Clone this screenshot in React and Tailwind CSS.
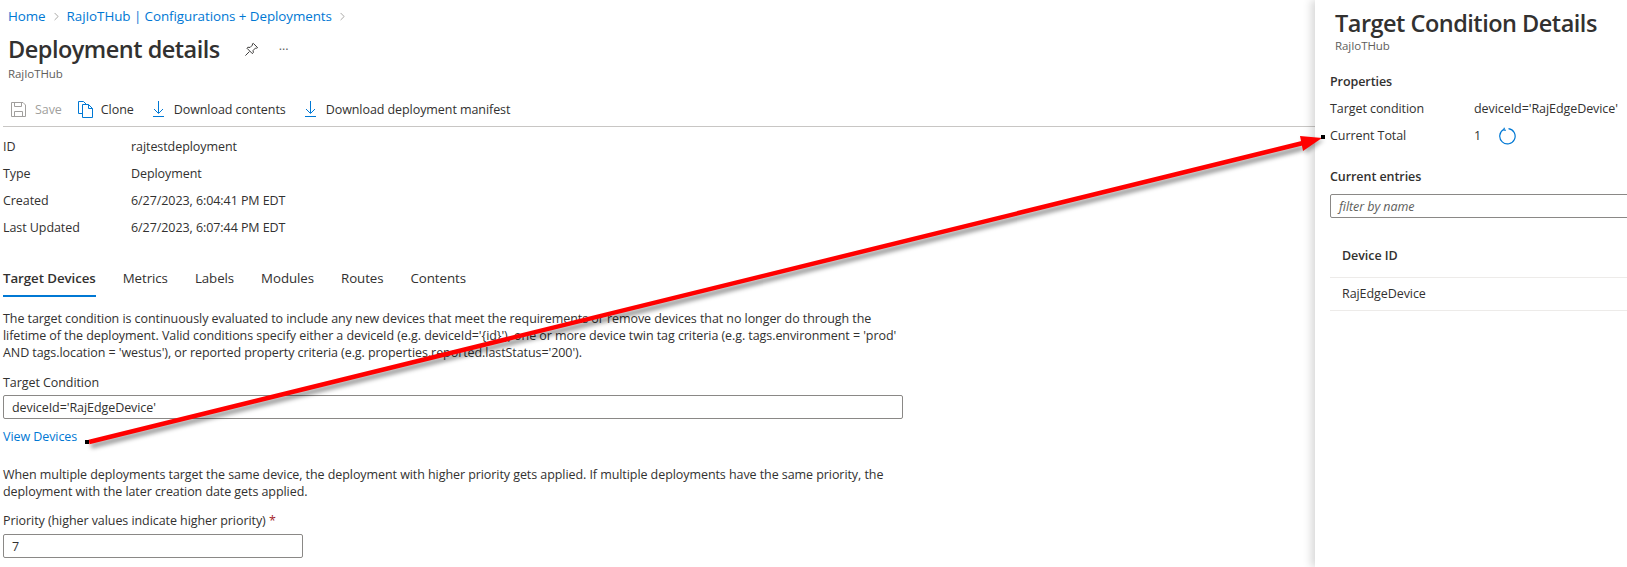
import { ChevronRight } from "lucide-react";

const rows = [
  ["ID", "rajtestdeployment"],
  ["Type", "Deployment"],
  ["Created", "6/27/2023, 6:04:41 PM EDT"],
  ["Last Updated", "6/27/2023, 6:07:44 PM EDT"],
];

const tabs = ["Metrics", "Labels", "Modules", "Routes", "Contents"];

function Pin() {
  return (
    <svg width="15" height="15" viewBox="0 0 16 16" fill="none" stroke="#323130" strokeWidth="1">
      <path d="M10 1.5 14.5 6l-1 .6-1.2-.2-2.6 2.6.2 2.4-1 1L3.1 6.6l1-1 2.4.2 2.6-2.6-.2-1.2z" />
      <path d="M5.8 10.2 1.5 14.5" />
    </svg>
  );
}

function SaveIcon() {
  return (
    <svg width="15" height="15" viewBox="0 0 15 15" fill="none" stroke="#a19f9d" strokeWidth="1">
      <path d="M.5.5h11.5l2.5 2.5v11.5H.5z" />
      <path d="M3.5.5v4h7v-4M3.5 14.5v-5h8v5" />
    </svg>
  );
}

function CloneIcon() {
  return (
    <svg width="15" height="17" viewBox="0 0 15 17" fill="none" stroke="#0078d4" strokeWidth="1">
      <path d="M4.5 12.5H.5V.5h5l2.5 2.5" />
      <path d="M4.5 3.5h6l4 4v9h-10z" />
      <path d="M10.5 3.5v4h4" />
    </svg>
  );
}

function DownloadIcon() {
  return (
    <svg width="13" height="17" viewBox="0 0 13 17" fill="none" stroke="#0078d4" strokeWidth="1">
      <path d="M6.5 0v12M2 8l4.5 4.5L11 8M1 15.5h11" />
    </svg>
  );
}

function Refresh() {
  return (
    <svg width="18" height="18" viewBox="0 0 18 18" fill="none" stroke="#0078d4" strokeWidth="1.2">
      <path d="M5.5 2.6A7.7 7.7 0 1 0 10.5 1.6" />
      <path d="M6.5 .8 5.6 2.8l2.2.6" />
    </svg>
  );
}

function Arrow() {
  return (
    <svg className="absolute left-0 top-0 pointer-events-none" width="1627" height="567" viewBox="0 0 1627 567">
      <path d="M91 446 1303 148" stroke="#000" strokeOpacity="0.4" strokeWidth="5" style={{ filter: "blur(2px)" }} />
      <path d="M1302 139 1324 140 1306 154z" fill="#000" fillOpacity="0.3" style={{ filter: "blur(2px)" }} />
      <path d="M89 442 1303 143" stroke="#ff0000" strokeWidth="4.5" />
      <path d="M1300 136 1322 138 1303 151z" fill="#ff0000" />
      <rect x="85" y="440" width="4" height="4" fill="#000" />
      <rect x="1321" y="135" width="4" height="4" fill="#000" />
    </svg>
  );
}

export default function App() {
  return (
    <div className="relative flex h-[567px] w-[1627px] overflow-hidden bg-white text-[12.5px] leading-[17px] text-[#323130] font-['Open_Sans','Noto_Sans',sans-serif] tracking-[-0.07px]">
      {/* Main blade */}
      <div className="w-[1315px] shrink-0 pl-[3px] pt-[8px]">
        <div className="flex items-center gap-[4px] pl-[5px] text-[13.4px] text-[#0078d4]">
          <span>Home</span>
          <ChevronRight size={13} strokeWidth={1} className="text-[#605e5c]" />
          <span>RajIoTHub | Configurations + Deployments</span>
          <ChevronRight size={13} strokeWidth={1} className="text-[#605e5c]" />
        </div>

        <div className="mt-[8px] flex h-[32px] items-center pl-[5px]">
          <h1 className="text-[23.5px] font-semibold leading-[32px] tracking-[-0.5px]">Deployment details</h1>
          <div className="ml-[24px]"><Pin /></div>
          <span className="ml-[20px] text-[#605e5c]">···</span>
        </div>
        <div className="pl-[5px] text-[11.5px] text-[#605e5c]">RajIoTHub</div>

        <div className="mt-[15px] flex h-[24px] items-center border-0 pl-[8px]">
          <SaveIcon />
          <span className="ml-[9px] text-[#a19f9d]">Save</span>
          <span className="ml-[16px]"><CloneIcon /></span>
          <span className="ml-[8px]">Clone</span>
          <span className="ml-[18px]"><DownloadIcon /></span>
          <span className="ml-[9px]">Download contents</span>
          <span className="ml-[18px]"><DownloadIcon /></span>
          <span className="ml-[9px]">Download deployment manifest</span>
        </div>
        <div className="mt-[5px] h-px bg-[#c8c6c4]" />

        <div className="mt-[6px]">
          {rows.map(([k, v]) => (
            <div key={k} className="flex h-[27px] items-center">
              <span className="w-[128px]">{k}</span>
              <span>{v}</span>
            </div>
          ))}
        </div>

        <div className="mt-[19px] flex h-[36px] items-center gap-[27px] text-[13.3px]">
          <span className="relative flex h-full items-center font-semibold">
            Target Devices
            <span className="absolute bottom-[-1px] left-0 h-[2px] w-[93px] bg-[#0078d4]" />
          </span>
          {tabs.map((t) => (
            <span key={t}>{t}</span>
          ))}
        </div>

        <p className="mt-[14px] w-[905px]">
          The target condition is continuously evaluated to include any new devices that meet the requirements or remove devices that no longer do through the lifetime of the deployment. Valid conditions specify either a deviceId (e.g. deviceId='{"{id}"}'), one or more device twin tag criteria (e.g. tags.environment = 'prod' AND tags.location = 'westus'), or reported property criteria (e.g. properties.reported.lastStatus='200').
        </p>

        <div className="mt-[13px]">Target Condition</div>
        <div className="mt-[4px] flex h-[24px] w-[900px] items-center rounded-[2px] border border-[#8a8886] pl-[8px]">
          deviceId='RajEdgeDevice'
        </div>
        <div className="mt-[9px] text-[#0078d4]">View Devices</div>

        <p className="mt-[21px] w-[905px]">
          When multiple deployments target the same device, the deployment with higher priority gets applied. If multiple deployments have the same priority, the deployment with the later creation date gets applied.
        </p>

        <div className="mt-[12px]">
          Priority (higher values indicate higher priority) <span className="text-[#a4262c]">*</span>
        </div>
        <div className="mt-[5px] flex h-[24px] w-[300px] items-center rounded-[2px] border border-[#8a8886] pl-[8px]">7</div>
      </div>

      {/* Side panel */}
      <div className="relative w-[312px] shrink-0 bg-white pl-[15px] pt-[9px] shadow-[-4px_0_8px_rgba(0,0,0,0.15)]">
        <h2 className="pl-[5px] text-[23.5px] font-semibold leading-[28px] tracking-[-0.5px]">Target Condition Details</h2>
        <div className="pl-[5px] text-[11.5px] text-[#605e5c]">RajIoTHub</div>

        <div className="mt-[19px] font-semibold">Properties</div>
        <div className="mt-[10px] flex h-[17px] items-center">
          <span className="w-[144px]">Target condition</span>
          <span>deviceId='RajEdgeDevice'</span>
        </div>
        <div className="mt-[10px] flex h-[17px] items-center">
          <span className="w-[144px]">Current Total</span>
          <span>1</span>
          <span className="ml-[17px]"><Refresh /></span>
        </div>

        <div className="mt-[24px] font-semibold">Current entries</div>
        <div className="mt-[9px] flex h-[24px] w-[320px] items-center rounded-[2px] border border-[#8a8886] pl-[8px] italic text-[#605e5c]">
          filter by name
        </div>

        <div className="mt-[16px] flex h-[44px] items-center border-b border-[#edebe9] pl-[12px] font-semibold">Device ID</div>
        <div className="flex h-[33px] items-center border-b border-[#edebe9] pb-[2px] pl-[12px]">RajEdgeDevice</div>
      </div>

      <Arrow />
    </div>
  );
}
